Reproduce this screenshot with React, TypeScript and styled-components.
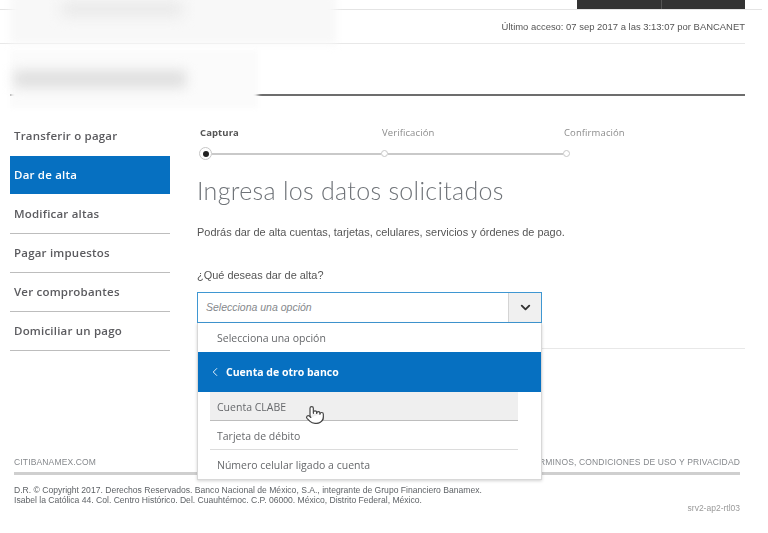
import React from 'react';
import styled, { createGlobalStyle } from 'styled-components';
import { ChevronDown, ChevronLeft, Pointer } from 'lucide-react';

const GlobalStyle = createGlobalStyle`
  html, body {
    margin: 0;
    padding: 0;
    background: #fff;
  }

  body {
    font-family: "Liberation Sans", Arial, sans-serif;
    color: #555;
  }
`;

const Page = styled.div`
  position: relative;
  width: 768px;
  height: 533px;
  overflow: hidden;
  filter: blur(0.35px);
`;

const TopBar = styled.div`
  display: flex;
  justify-content: flex-end;
  height: 9px;
  width: 762px;
  border-bottom: 1px solid #e4e4e4;
`;

const DarkTabs = styled.div`
  display: flex;
  width: 168px;
  height: 9px;
  margin-right: 17px;
  background: #333;
`;

const DarkTab = styled.div`
  flex: 1;

  & + & {
    border-left: 1px solid #555;
  }
`;

const AccessRow = styled.div`
  display: flex;
  align-items: center;
  justify-content: flex-end;
  height: 33px;
  width: 745px;
  border-bottom: 1px solid #e8e8e8;
  font-size: 9.45px;
  color: #555;
  white-space: nowrap;
`;

const TitleArea = styled.div`
  height: 50px;
  width: 735px;
  margin-left: 10px;
  border-bottom: 2px solid #6d6d6d;
`;

const Redaction = styled.div<{ $left: number; $top: number; $width: number; $height: number; $shade: string; $blur: number }>`
  position: absolute;
  left: ${({ $left }) => $left}px;
  top: ${({ $top }) => $top}px;
  width: ${({ $width }) => $width}px;
  height: ${({ $height }) => $height}px;
  background: ${({ $shade }) => $shade};
  filter: blur(${({ $blur }) => $blur}px);
`;

const Main = styled.div`
  display: flex;
  margin-left: 10px;
`;

const Sidebar = styled.nav`
  display: flex;
  flex-direction: column;
  width: 160px;
  margin-top: 21px;
`;

const MenuItem = styled.div<{ $active?: boolean; $divided?: boolean }>`
  display: flex;
  align-items: center;
  height: ${({ $active }) => ($active ? 38 : 39)}px;
  margin-bottom: ${({ $active }) => ($active ? 1 : 0)}px;
  padding: 0 0 2px 4px;
  box-sizing: border-box;
  font-family: "Open Sans", sans-serif;
  font-size: 11.5px;
  font-weight: 600;
  letter-spacing: 0.2px;
  color: ${({ $active }) => ($active ? '#fff' : '#5b5b5f')};
  background: ${({ $active }) => ($active ? '#0670c1' : 'transparent')};
  border-bottom: ${({ $divided }) => ($divided ? '1px solid #bdbdbd' : 'none')};
`;

const Content = styled.div`
  flex: 1;
  padding-top: 31px;
  padding-left: 27px;
  width: 548px;
`;

const StepLabels = styled.div`
  display: grid;
  grid-template-columns: repeat(3, 182px);
  padding-left: 3px;
  height: 12px;
`;

const StepLabel = styled.span<{ $current?: boolean }>`
  font-family: "Open Sans", sans-serif;
  font-size: 9.5px;
  line-height: 12px;
  font-weight: ${({ $current }) => ($current ? 700 : 400)};
  color: ${({ $current }) => ($current ? '#555' : '#8c8c8c')};
  letter-spacing: 0.1px;
`;

const Track = styled.div`
  display: flex;
  align-items: center;
  margin-top: 8px;
  margin-left: 2px;
  height: 13px;
`;

const CurrentDot = styled.div`
  display: flex;
  align-items: center;
  justify-content: center;
  flex: none;
  width: 13px;
  height: 13px;
  box-sizing: border-box;
  border: 1px solid #c6c6c6;
  border-radius: 50%;
  background: #fff;

  &::after {
    content: '';
    width: 6px;
    height: 6px;
    border-radius: 50%;
    background: #222;
  }
`;

const TrackLine = styled.div<{ $width: number }>`
  flex: none;
  width: ${({ $width }) => $width}px;
  height: 2px;
  background: #c9c9c9;
`;

const StepDot = styled.div`
  flex: none;
  width: 7px;
  height: 7px;
  box-sizing: border-box;
  border: 1px solid #c6c6c6;
  border-radius: 50%;
  background: #fff;
`;

const Heading = styled.h1`
  margin: 16px 0 0;
  font-family: "Lato", sans-serif;
  font-size: 25px;
  line-height: 29px;
  font-weight: 300;
  letter-spacing: 0.3px;
  color: #6f7378;
  white-space: nowrap;
`;

const Lead = styled.p`
  margin: 20px 0 0;
  font-size: 10.95px;
  line-height: 14px;
  color: #555;
  white-space: nowrap;
`;

const FieldLabel = styled.div`
  margin-top: 29px;
  font-size: 10.95px;
  line-height: 14px;
  color: #555;
`;

const SelectWrap = styled.div`
  position: relative;
  width: 345px;
  margin-top: 10px;
`;

const SelectBox = styled.div`
  display: flex;
  height: 31px;
  box-sizing: border-box;
  border: 1px solid #3f97d2;
  background: #fff;
`;

const SelectValue = styled.div`
  flex: 1;
  display: flex;
  align-items: center;
  padding: 0 0 2px 8px;
  font-size: 10.5px;
  font-style: italic;
  color: #85888c;
`;

const SelectButton = styled.div`
  display: flex;
  align-items: center;
  justify-content: center;
  width: 32px;
  background: #f0f0f0;
  border-left: 1px solid #d4d4d4;
  color: #333;
`;

const Dropdown = styled.div`
  position: absolute;
  top: 31px;
  left: 0;
  width: 345px;
  box-sizing: border-box;
  background: #fff;
  border: 1px solid #d8d8d8;
  border-top: none;
  box-shadow: 0 1px 3px rgba(0, 0, 0, 0.18);
  z-index: 2;
`;

const Option = styled.div<{ $hover?: boolean; $last?: boolean }>`
  display: flex;
  align-items: center;
  height: 29px;
  margin: 0 23px 0 12px;
  padding: ${({ $last }) => ($last ? 0 : 2)}px 0 0 7px;
  box-sizing: border-box;
  font-family: "Open Sans", sans-serif;
  font-size: 10.5px;
  color: #66686b;
  background: ${({ $hover }) => ($hover ? '#efefef' : 'transparent')};
  border-bottom: ${({ $last, $hover }) => ($last ? 'none' : `1px solid ${$hover ? '#bdbdbd' : '#dcdcdc'}`)};
`;

const GroupHeader = styled.div`
  display: flex;
  align-items: center;
  gap: 4px;
  height: 40px;
  padding-left: 10px;
  background: #0670c1;
  color: #fff;
  font-family: "Open Sans", sans-serif;
  font-size: 10.5px;
  font-weight: 700;
`;

const HandCursor = styled(Pointer)`
  position: absolute;
  left: 107px;
  top: 82px;
  fill: #fff;
  color: #444;
`;

const Divider = styled.div`
  height: 1px;
  width: 548px;
  margin-top: 25px;
  background: #e8e8e8;
`;

const Footer = styled.footer`
  margin: 104px 28px 0 14px;
`;

const FooterLinks = styled.div`
  display: flex;
  justify-content: space-between;
  height: 17px;
  font-size: 8.5px;
  line-height: 14px;
  color: #85888c;
  border-bottom: 3px solid #cfcfcf;
  letter-spacing: 0.15px;
`;

const Legal = styled.p`
  margin: 10px 0 0;
  font-size: 8.58px;
  line-height: 10px;
  color: #5f6367;
  white-space: nowrap;
`;

const ServerTag = styled.div`
  margin-top: -2px;
  text-align: right;
  font-size: 8.5px;
  line-height: 10px;
  color: #9a9a9a;
`;

const menu = ['Modificar altas', 'Pagar impuestos', 'Ver comprobantes', 'Domiciliar un pago'];

const App = () => (
  <Page>
    <GlobalStyle />
    <TopBar>
      <DarkTabs>
        <DarkTab />
        <DarkTab />
      </DarkTabs>
    </TopBar>
    <AccessRow>Último acceso: 07 sep 2017 a las 3:13:07 por BANCANET</AccessRow>
    <TitleArea />
    <Main>
      <Sidebar>
        <MenuItem>Transferir o pagar</MenuItem>
        <MenuItem $active>Dar de alta</MenuItem>
        {menu.map((item) => (
          <MenuItem key={item} $divided>{item}</MenuItem>
        ))}
      </Sidebar>
      <Content>
        <StepLabels>
          <StepLabel $current>Captura</StepLabel>
          <StepLabel>Verificación</StepLabel>
          <StepLabel>Confirmación</StepLabel>
        </StepLabels>
        <Track>
          <CurrentDot />
          <TrackLine $width={169} />
          <StepDot />
          <TrackLine $width={175} />
          <StepDot />
        </Track>
        <Heading>Ingresa los datos solicitados</Heading>
        <Lead>Podrás dar de alta cuentas, tarjetas, celulares, servicios y órdenes de pago.</Lead>
        <FieldLabel>¿Qué deseas dar de alta?</FieldLabel>
        <SelectWrap>
          <SelectBox>
            <SelectValue>Selecciona una opción</SelectValue>
            <SelectButton>
              <ChevronDown size={15} strokeWidth={3} />
            </SelectButton>
          </SelectBox>
          <Dropdown>
            <Option $last>Selecciona una opción</Option>
            <GroupHeader>
              <ChevronLeft size={14} strokeWidth={1.5} />
              Cuenta de otro banco
            </GroupHeader>
            <Option $hover>Cuenta CLABE</Option>
            <Option>Tarjeta de débito</Option>
            <Option $last>Número celular ligado a cuenta</Option>
            <HandCursor size={20} strokeWidth={1.4} />
          </Dropdown>
        </SelectWrap>
        <Divider />
      </Content>
    </Main>
    <Footer>
      <FooterLinks>
        <span>CITIBANAMEX.COM</span>
        <span>TÉRMINOS, CONDICIONES DE USO Y PRIVACIDAD</span>
      </FooterLinks>
      <Legal>
        D.R. © Copyright 2017. Derechos Reservados. Banco Nacional de México, S.A., integrante de Grupo Financiero Banamex.
        <br />
        Isabel la Católica 44. Col. Centro Histórico. Del. Cuauhtémoc. C.P. 06000. México, Distrito Federal, México.
      </Legal>
      <ServerTag>srv2-ap2-rtl03</ServerTag>
    </Footer>
    <Redaction $left={10} $top={-6} $width={326} $height={50} $shade="#f8f8f8" $blur={4} />
    <Redaction $left={62} $top={2} $width={120} $height={14} $shade="#e8e8e8" $blur={7} />
    <Redaction $left={10} $top={50} $width={248} $height={58} $shade="#fbfbfb" $blur={2} />
    <Redaction $left={14} $top={70} $width={172} $height={18} $shade="#e0e0e0" $blur={6} />
  </Page>
);

export default App;
